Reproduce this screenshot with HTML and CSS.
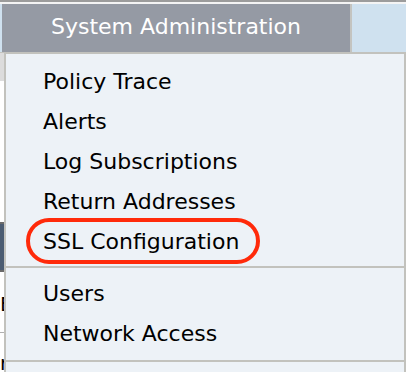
FILE: index.html
```html
<!DOCTYPE html>
<html lang="en">
<head>
    <meta charset="UTF-8">
    <meta name="viewport" content="width=device-width, initial-scale=1.0">
    <title>System Administration</title>
    <link rel="stylesheet" href="styles.css">
</head>
<body>
    <div class="topline"></div>
    <nav class="tabs">
        <div class="tab-edge"></div>
        <div class="tab active">System Administration</div>
        <div class="tab-rest"></div>
    </nav>
    <div class="page">
        <div class="side-dots"></div>
        <div class="side-block"></div>
        <div class="side-letter">E</div>
        <div class="side-rule"></div>
        <div class="side-letter low">r</div>
    </div>
    <ul class="menu">
        <li>Policy Trace</li>
        <li>Alerts</li>
        <li>Log Subscriptions</li>
        <li>Return Addresses</li>
        <li class="marked"><span>SSL Configuration</span></li>
        <li class="sep">Users</li>
        <li>Network Access</li>
        <li class="sep last"></li>
    </ul>
</body>
</html>
```

FILE: styles.css
```css
body {
    margin: 0;
    background: #fff;
    font-family: "DejaVu Sans", Verdana, sans-serif;
    width: 406px;
    height: 372px;
    overflow: hidden;
    position: relative;
}
.topline {
    height: 2px;
    background: #9c9c9c;
    border-bottom: 2px solid #f4f4f4;
}
.tabs {
    display: flex;
    height: 48px;
    border-bottom: 1px solid #c2c2be;
}
.tab-edge {
    width: 2px;
    background: #cfe1ef;
}
.tab {
    width: 348px;
    background: #959aa4;
    color: #fff;
    font-size: 22px;
    text-align: center;
    line-height: 46px;
    border-right: 2px solid #c4c4c0;
}
.tab-rest {
    flex: 1;
    background: #cfe1ef;
}
.page {
    height: 318px;
    overflow: hidden;
}
.side-dots {
    width: 4px;
    height: 28px;
    background: #dcdcdc;
}
.side-block {
    margin-top: 141px;
    width: 4px;
    height: 46px;
    background: #4b5c72;
    border-top: 2px solid #6a6a6a;
    border-bottom: 2px solid #6a6a6a;
}
.side-letter {
    margin-top: 22px;
    font-size: 20px;
    line-height: 20px;
    width: 4px;
    overflow: hidden;
    color: #000;
}
.side-rule {
    margin-top: 18px;
    width: 4px;
    height: 1px;
    background: #b0b0b0;
}
.side-letter.low {
    margin-top: 20px;
}
.menu {
    position: absolute;
    left: 4px;
    top: 52px;
    width: 398px;
    height: 318px;
    margin: 0;
    padding: 8px 0 0;
    list-style: none;
    background: #edf2f7;
    border: 2px solid #c2c2bd;
    border-bottom: none;
    overflow: hidden;
}
.menu li {
    height: 40px;
    line-height: 40px;
    padding-left: 37px;
    font-size: 22px;
    color: #000;
}
.menu li.sep {
    border-top: 2px solid #c2c2bd;
    margin-top: 4px;
    padding-top: 6px;
}
.menu li.last {
    margin-top: 6px;
}
.marked span {
    position: relative;
}
.marked span::after {
    content: "";
    position: absolute;
    left: -17px;
    right: -21px;
    top: -11px;
    bottom: -10px;
    border: 4px solid #ff2a0a;
    border-radius: 24px;
}
```
